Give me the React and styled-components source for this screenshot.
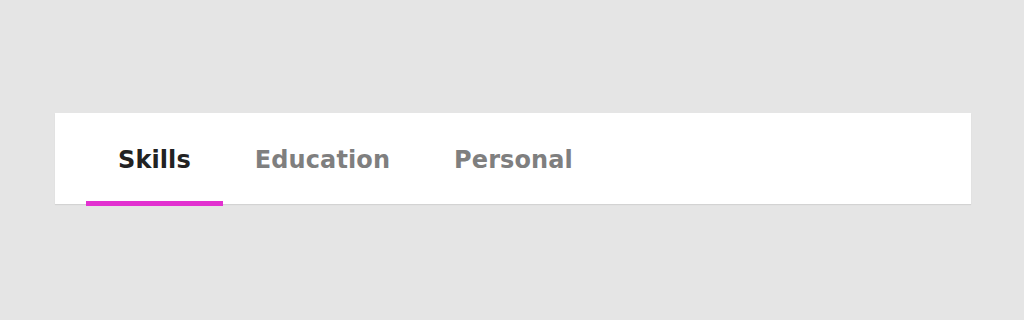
import React, { useState } from 'react'
import styled, { createGlobalStyle } from 'styled-components'

const GlobalStyle = createGlobalStyle`
      html, body {
            margin: 0;
            min-height: 100%;
            background: #e5e5e5;
            font-family: "DejaVu Sans", "Noto Sans", sans-serif;
      }
`

const Page = styled.div`
      min-height: 320px;
      box-sizing: border-box;
      padding: 113px 53px 0 55px;
`

const Card = styled.div`
      background: #ffffff;
      height: 91px;
      box-shadow: 0 1px 1px rgba(0, 0, 0, 0.08);
      display: flex;
      align-items: flex-start;
      padding-left: 31px;
`

const Tab = styled.div`
      box-sizing: border-box;
      height: 93px;
      display: flex;
      align-items: center;
      padding: 6px 32px 0;
      border-bottom: 5px solid ${props => props.$active ? '#e231d0' : 'transparent'};
      font-size: 24px;
      font-weight: 600;
      letter-spacing: 0.1px;
      color: ${props => props.$active ? '#222222' : '#7f7f7f'};
      cursor: pointer;
`

const tabs = ['Skills', 'Education', 'Personal']

export default function App() {
      const [active, setActive] = useState(0)
      return (
            <Page>
                  <GlobalStyle />
                  <Card>
                        {tabs.map((t, i) => (
                              <Tab key={t} $active={i === active} onClick={() => setActive(i)}>
                                    {t}
                              </Tab>
                        ))}
                  </Card>
            </Page>
      )
}
